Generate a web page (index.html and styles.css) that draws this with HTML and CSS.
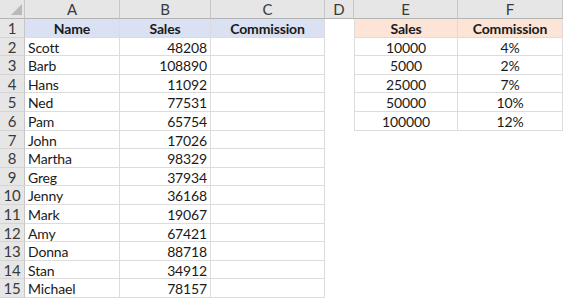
FILE: index.html
```html
<!DOCTYPE html>
<html lang="en">
<head>
  <meta charset="UTF-8">
  <title>Commission Sheet</title>
  <link rel="stylesheet" href="styles.css">
</head>
<body>
  <div class="sheet">
    <!-- column headers -->
    <div class="corner"><span class="tri"></span></div>
    <div class="col-hd">A</div>
    <div class="col-hd">B</div>
    <div class="col-hd">C</div>
    <div class="col-hd">D</div>
    <div class="col-hd">E</div>
    <div class="col-hd">F</div>

    <div class="row-hd">1</div>
    <div class="cell hd-blue">Name</div>
    <div class="cell hd-blue">Sales</div>
    <div class="cell hd-blue">Commission</div>
    <div class="gap"></div>
    <div class="cell tbl first hd-peach">Sales</div>
    <div class="cell tbl hd-peach">Commission</div>

    <div class="row-hd">2</div>
    <div class="cell name">Scott</div>
    <div class="cell num">48208</div>
    <div class="cell"></div>
    <div class="gap"></div>
    <div class="cell tbl first">10000</div>
    <div class="cell tbl">4%</div>

    <div class="row-hd">3</div>
    <div class="cell name">Barb</div>
    <div class="cell num">108890</div>
    <div class="cell"></div>
    <div class="gap"></div>
    <div class="cell tbl first">5000</div>
    <div class="cell tbl">2%</div>

    <div class="row-hd">4</div>
    <div class="cell name">Hans</div>
    <div class="cell num">11092</div>
    <div class="cell"></div>
    <div class="gap"></div>
    <div class="cell tbl first">25000</div>
    <div class="cell tbl">7%</div>

    <div class="row-hd">5</div>
    <div class="cell name">Ned</div>
    <div class="cell num">77531</div>
    <div class="cell"></div>
    <div class="gap"></div>
    <div class="cell tbl first">50000</div>
    <div class="cell tbl">10%</div>

    <div class="row-hd">6</div>
    <div class="cell name">Pam</div>
    <div class="cell num">65754</div>
    <div class="cell"></div>
    <div class="gap"></div>
    <div class="cell tbl first">100000</div>
    <div class="cell tbl">12%</div>

    <div class="row-hd">7</div>
    <div class="cell name">John</div>
    <div class="cell num">17026</div>
    <div class="cell"></div>
    <div class="gap wide"></div>

    <div class="row-hd">8</div>
    <div class="cell name">Martha</div>
    <div class="cell num">98329</div>
    <div class="cell"></div>
    <div class="gap wide"></div>

    <div class="row-hd">9</div>
    <div class="cell name">Greg</div>
    <div class="cell num">37934</div>
    <div class="cell"></div>
    <div class="gap wide"></div>

    <div class="row-hd">10</div>
    <div class="cell name">Jenny</div>
    <div class="cell num">36168</div>
    <div class="cell"></div>
    <div class="gap wide"></div>

    <div class="row-hd">11</div>
    <div class="cell name">Mark</div>
    <div class="cell num">19067</div>
    <div class="cell"></div>
    <div class="gap wide"></div>

    <div class="row-hd">12</div>
    <div class="cell name">Amy</div>
    <div class="cell num">67421</div>
    <div class="cell"></div>
    <div class="gap wide"></div>

    <div class="row-hd">13</div>
    <div class="cell name">Donna</div>
    <div class="cell num">88718</div>
    <div class="cell"></div>
    <div class="gap wide"></div>

    <div class="row-hd">14</div>
    <div class="cell name">Stan</div>
    <div class="cell num">34912</div>
    <div class="cell"></div>
    <div class="gap wide"></div>

    <div class="row-hd">15</div>
    <div class="cell name">Michael</div>
    <div class="cell num">78157</div>
    <div class="cell"></div>
    <div class="gap wide"></div>
  </div>
</body>
</html>
```

FILE: styles.css
```css
* {
  margin: 0;
  padding: 0;
  box-sizing: border-box;
}

body {
  font-family: 'Lato', 'Liberation Sans', sans-serif;
  font-size: 14px;
  letter-spacing: -0.15px;
  color: #1a1a1a;
  background: #ffffff;
  width: 564px;
  height: 300px;
  overflow: hidden;
}

.sheet {
  display: grid;
  grid-template-columns: 25px 95px 91px 114px 29px 104px 105px;
  grid-template-rows: 19px repeat(15, 18.6px);
}

.corner {
  background: #e6e6e6;
  border-right: 1px solid #c6c6c6;
  border-bottom: 1px solid #b4b4b4;
  position: relative;
}

.corner .tri {
  position: absolute;
  right: 2px;
  bottom: 3px;
  width: 0;
  height: 0;
  border-left: 11px solid transparent;
  border-bottom: 11px solid #b9b9b9;
}

.col-hd {
  background: #e6e6e6;
  border-right: 1px solid #c6c6c6;
  border-bottom: 1px solid #b4b4b4;
  color: #3a3a3a;
  font-size: 15px;
  text-align: center;
  line-height: 18px;
}

.row-hd {
  background: #e6e6e6;
  border-right: 1px solid #c6c6c6;
  border-bottom: 1px solid #d4d4d4;
  color: #3a3a3a;
  font-size: 15px;
  text-align: center;
  line-height: 19px;
}

.cell {
  border-right: 1px solid #dcdcdc;
  border-bottom: 1px solid #dcdcdc;
  line-height: 19px;
  padding: 0 3px;
  white-space: nowrap;
  overflow: hidden;
}

.name {
  text-align: left;
}

.num {
  text-align: right;
}

.hd-blue {
  background: #d9e1f2;
  font-weight: 700;
  text-align: center;
}

.hd-peach {
  background: #fce4d6;
  font-weight: 700;
}

.tbl {
  text-align: center;
}

.tbl.first {
  border-left: 1px solid #dcdcdc;
}

.gap.wide {
  grid-column: span 3;
}
```
